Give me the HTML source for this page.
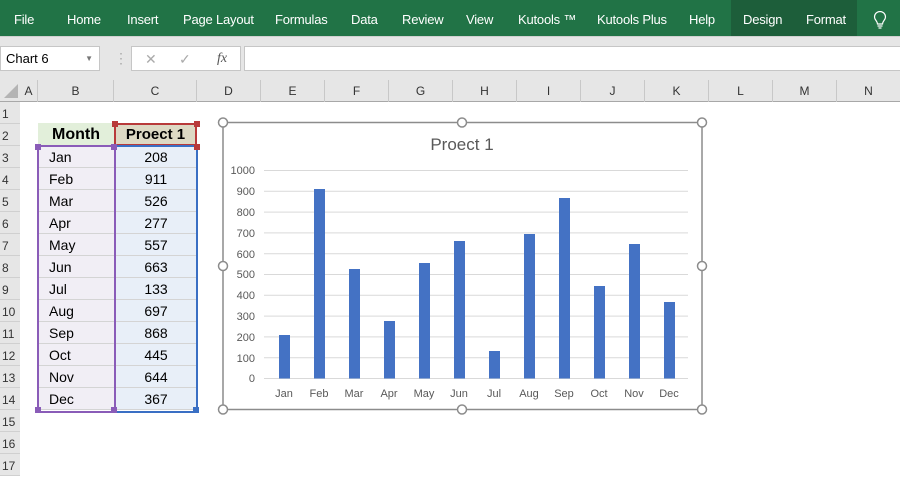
<!DOCTYPE html>
<html><head><style>
body{margin:0;width:900px;height:468px;overflow:hidden;font-family:"Liberation Sans",sans-serif;background:#fff;position:relative}
.a{position:absolute}
.rib{left:0;top:0;width:900px;height:36px;background:#217346}
.rib span{position:absolute;top:12px;color:#fff;font-size:13px;letter-spacing:-0.2px}
.hc{position:absolute;top:80px;height:22px;line-height:22px;text-align:center;font-size:12px;color:#333;border-right:1px solid #c8c8c8;box-sizing:border-box}
.rh{position:absolute;left:0;width:20px;height:22px;line-height:24px;text-align:left;padding-left:2px;font-size:12px;color:#333;border-bottom:1px solid #d0d0d0;box-sizing:border-box;background:#e6e6e6}
.cb{position:absolute;left:39px;width:75px;height:22px;line-height:22px;font-size:14px;padding-left:10px;box-sizing:border-box;background:#f1eef5;border-bottom:1px solid #d4d4d4}
.cc{position:absolute;left:115px;width:82px;height:22px;line-height:22px;font-size:14px;text-align:center;box-sizing:border-box;background:#e8eff8;border-bottom:1px solid #d4d4d4}
</style></head><body>
<div class="a rib">
<span style="left:14px">File</span><span style="left:67px">Home</span><span style="left:127px">Insert</span><span style="left:183px">Page Layout</span><span style="left:275px">Formulas</span><span style="left:351px">Data</span><span style="left:402px">Review</span><span style="left:466px">View</span><span style="left:518px">Kutools ™</span><span style="left:597px">Kutools Plus</span><span style="left:689px">Help</span>
<div class="a" style="left:731px;top:0;width:126px;height:36px;background:#1d5e3a"></div>
<span style="left:743px">Design</span><span style="left:806px">Format</span>
<svg class="a" style="left:872px;top:11px" width="16" height="18" viewBox="0 0 16 18"><path d="M5.5 13 C5.5 10 2.5 9 2.5 6 A5.5 5.5 0 0 1 13.5 6 C13.5 9 10.5 10 10.5 13 Z M5.5 15 H10.5 M6.5 17 H9.5" fill="none" stroke="#fff" stroke-width="1.2"/></svg>
</div>
<div class="a" style="left:0;top:36px;width:900px;height:44px;background:#e6e6e6;border-top:1px solid #d0d0d0"></div>
<div class="a" style="left:0;top:46px;width:100px;height:25px;background:#fff;border:1px solid #c6c6c6;box-sizing:border-box;font-size:13px;line-height:24px;padding-left:5px">Chart 6<span style="position:absolute;right:6px;font-size:8px;color:#777">▼</span></div>
<div class="a" style="left:114px;top:50px;color:#aaa;font-size:14px">⋮</div>
<div class="a" style="left:131px;top:46px;width:110px;height:25px;background:#fff;border:1px solid #c6c6c6;box-sizing:border-box;font-size:14px;color:#aaa;line-height:24px"><span class="a" style="left:13px">✕</span><span class="a" style="left:47px">✓</span><span class="a" style="left:85px;color:#555;font-style:italic;font-family:'Liberation Serif',serif">fx</span></div>
<div class="a" style="left:244px;top:46px;width:660px;height:25px;background:#fff;border:1px solid #c6c6c6;box-sizing:border-box"></div>
<div class="a" style="left:0;top:80px;width:900px;height:22px;background:#e6e6e6;border-bottom:1px solid #a8a8a8;box-sizing:border-box"></div>
<div class="a" style="left:4px;top:84px;width:0;height:0;border-left:14px solid transparent;border-bottom:14px solid #b4b4b4"></div>
<div class="hc" style="left:20px;width:18px">A</div><div class="hc" style="left:38px;width:76px">B</div><div class="hc" style="left:114px;width:83px">C</div><div class="hc" style="left:197px;width:64px">D</div><div class="hc" style="left:261px;width:64px">E</div><div class="hc" style="left:325px;width:64px">F</div><div class="hc" style="left:389px;width:64px">G</div><div class="hc" style="left:453px;width:64px">H</div><div class="hc" style="left:517px;width:64px">I</div><div class="hc" style="left:581px;width:64px">J</div><div class="hc" style="left:645px;width:64px">K</div><div class="hc" style="left:709px;width:64px">L</div><div class="hc" style="left:773px;width:64px">M</div><div class="hc" style="left:837px;width:64px">N</div>
<div class="a" style="left:0;top:102px;width:20px;height:366px;background:#e6e6e6;border-right:1px solid #a8a8a8;box-sizing:border-box"></div>
<div class="rh" style="top:102px">1</div><div class="rh" style="top:124px">2</div><div class="rh" style="top:146px">3</div><div class="rh" style="top:168px">4</div><div class="rh" style="top:190px">5</div><div class="rh" style="top:212px">6</div><div class="rh" style="top:234px">7</div><div class="rh" style="top:256px">8</div><div class="rh" style="top:278px">9</div><div class="rh" style="top:300px">10</div><div class="rh" style="top:322px">11</div><div class="rh" style="top:344px">12</div><div class="rh" style="top:366px">13</div><div class="rh" style="top:388px">14</div><div class="rh" style="top:410px">15</div><div class="rh" style="top:432px">16</div><div class="rh" style="top:454px">17</div>
<div class="a" style="left:38px;top:123px;width:76px;height:23px;background:#e2efda;font-weight:bold;font-size:16px;line-height:23px;text-align:center">Month</div>
<div class="a" style="left:114px;top:123px;width:83px;height:23px;background:#ddd9c4;font-weight:bold;font-size:15px;line-height:20px;text-align:center;border:2px solid #b83a3a;box-sizing:border-box">Proect 1</div>
<div class="cb" style="top:146px">Jan</div><div class="cc" style="top:146px">208</div>
<div class="cb" style="top:168px">Feb</div><div class="cc" style="top:168px">911</div>
<div class="cb" style="top:190px">Mar</div><div class="cc" style="top:190px">526</div>
<div class="cb" style="top:212px">Apr</div><div class="cc" style="top:212px">277</div>
<div class="cb" style="top:234px">May</div><div class="cc" style="top:234px">557</div>
<div class="cb" style="top:256px">Jun</div><div class="cc" style="top:256px">663</div>
<div class="cb" style="top:278px">Jul</div><div class="cc" style="top:278px">133</div>
<div class="cb" style="top:300px">Aug</div><div class="cc" style="top:300px">697</div>
<div class="cb" style="top:322px">Sep</div><div class="cc" style="top:322px">868</div>
<div class="cb" style="top:344px">Oct</div><div class="cc" style="top:344px">445</div>
<div class="cb" style="top:366px">Nov</div><div class="cc" style="top:366px">644</div>
<div class="cb" style="top:388px">Dec</div><div class="cc" style="top:388px">367</div>
<div class="a" style="left:37px;top:145px;width:75px;height:264px;border:2px solid #8a5cb8"></div>
<div class="a" style="left:114px;top:145px;width:82px;height:264px;border:2px solid #3a6fc4;border-left:none"></div>
<div class="a" style="left:112px;top:121px;width:6px;height:6px;background:#b83a3a"></div><div class="a" style="left:194px;top:121px;width:6px;height:6px;background:#b83a3a"></div><div class="a" style="left:194px;top:144px;width:6px;height:6px;background:#b83a3a"></div>
<div class="a" style="left:35px;top:144px;width:6px;height:6px;background:#8a5cb8"></div><div class="a" style="left:111px;top:144px;width:6px;height:6px;background:#8a5cb8"></div>
<div class="a" style="left:35px;top:407px;width:6px;height:6px;background:#8a5cb8"></div><div class="a" style="left:111px;top:407px;width:6px;height:6px;background:#8a5cb8"></div><div class="a" style="left:193px;top:407px;width:6px;height:6px;background:#3a6fc4"></div>
<svg class="a" style="left:0;top:0" width="900" height="468">
<rect x="223" y="122.5" width="479" height="287" fill="#fff" stroke="#8c8c8c" stroke-width="1.5"/>
<text x="462" y="150" font-size="17" fill="#595959" text-anchor="middle" font-family="Liberation Sans">Proect 1</text>
<g stroke="#d9d9d9" stroke-width="1">
<line x1="264" x2="688" y1="170.5" y2="170.5"/><line x1="264" x2="688" y1="191.3" y2="191.3"/><line x1="264" x2="688" y1="212.1" y2="212.1"/><line x1="264" x2="688" y1="232.9" y2="232.9"/><line x1="264" x2="688" y1="253.7" y2="253.7"/><line x1="264" x2="688" y1="274.5" y2="274.5"/><line x1="264" x2="688" y1="295.3" y2="295.3"/><line x1="264" x2="688" y1="316.1" y2="316.1"/><line x1="264" x2="688" y1="336.9" y2="336.9"/><line x1="264" x2="688" y1="357.7" y2="357.7"/><line x1="264" x2="688" y1="378.5" y2="378.5"/>
</g>
<g font-size="11" fill="#595959" text-anchor="end" font-family="Liberation Sans">
<text x="255" y="174">1000</text><text x="255" y="195">900</text><text x="255" y="216">800</text><text x="255" y="237">700</text><text x="255" y="258">600</text><text x="255" y="278">500</text><text x="255" y="299">400</text><text x="255" y="320">300</text><text x="255" y="341">200</text><text x="255" y="362">100</text><text x="255" y="382">0</text>
</g>
<g fill="#4472c4">
<rect x="279" y="335" width="11" height="43.5"/><rect x="314" y="189" width="11" height="189.5"/><rect x="349" y="269" width="11" height="109.5"/><rect x="384" y="321" width="11" height="57.5"/><rect x="419" y="263" width="11" height="115.5"/><rect x="454" y="241" width="11" height="137.5"/><rect x="489" y="351" width="11" height="27.5"/><rect x="524" y="234" width="11" height="144.5"/><rect x="559" y="198" width="11" height="180.5"/><rect x="594" y="286" width="11" height="92.5"/><rect x="629" y="244" width="11" height="134.5"/><rect x="664" y="302" width="11" height="76.5"/>
</g>
<g font-size="11" fill="#595959" text-anchor="middle" font-family="Liberation Sans">
<text x="284" y="397">Jan</text><text x="319" y="397">Feb</text><text x="354" y="397">Mar</text><text x="389" y="397">Apr</text><text x="424" y="397">May</text><text x="459" y="397">Jun</text><text x="494" y="397">Jul</text><text x="529" y="397">Aug</text><text x="564" y="397">Sep</text><text x="599" y="397">Oct</text><text x="634" y="397">Nov</text><text x="669" y="397">Dec</text>
</g>
<g fill="#fff" stroke="#8c8c8c" stroke-width="1.5">
<circle cx="223" cy="122.5" r="4.5"/><circle cx="462" cy="122.5" r="4.5"/><circle cx="702" cy="122.5" r="4.5"/><circle cx="223" cy="266" r="4.5"/><circle cx="702" cy="266" r="4.5"/><circle cx="223" cy="409.5" r="4.5"/><circle cx="462" cy="409.5" r="4.5"/><circle cx="702" cy="409.5" r="4.5"/>
</g>
</svg>
</body></html>
